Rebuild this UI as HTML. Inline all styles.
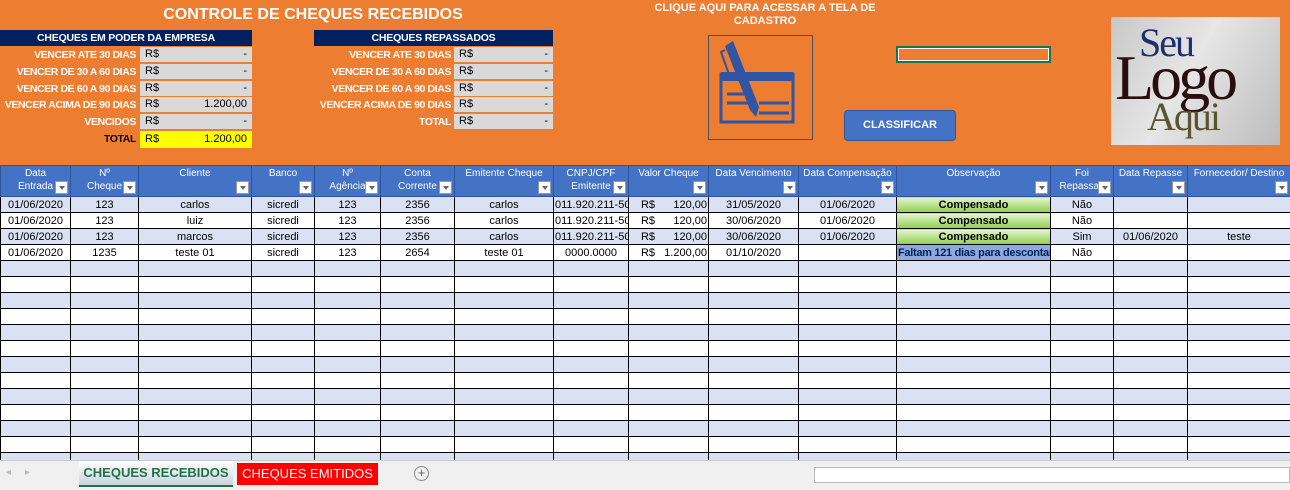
<!DOCTYPE html>
<html><head><meta charset="utf-8"><style>
*{margin:0;padding:0;box-sizing:border-box}
body{width:1290px;height:490px;overflow:hidden;background:#fff;font-family:"Liberation Sans",sans-serif;position:relative}
.top{position:absolute;left:0;top:0;width:1290px;height:165px;background:#ED7D31}
.a{position:absolute}
.nav{background:#002060;color:#fff;font-weight:bold;font-size:10.5px;text-align:center;height:16px;line-height:16px;letter-spacing:-0.2px}
.lbl{color:#fff;font-weight:bold;font-size:10.5px;text-align:right;height:16px;line-height:16px;white-space:nowrap;letter-spacing:-0.4px}
.cell{background:#D9D9D9;font-size:11px;height:15px;line-height:15px;padding:0 5px;display:flex;justify-content:space-between;color:#000}
table{position:absolute;left:0;top:165px;width:1290px;border-collapse:collapse;table-layout:fixed}
td{border:1px solid #000;font-size:11px;height:16px;line-height:14px;text-align:center;white-space:nowrap;overflow:hidden;padding:0 1px}
th{background:#4472C4;color:#fff;font-weight:normal;font-size:10px;height:31px;border:1px solid #2f5597;vertical-align:top;position:relative;line-height:13px;padding-top:1px;white-space:nowrap;overflow:hidden}
th i{position:absolute;right:2px;bottom:2px;width:13px;height:13px;background:#fff;border:1px solid #999}
th i:after{content:"";position:absolute;left:3px;top:4px;border-left:3px solid transparent;border-right:3px solid transparent;border-top:4px solid #666}
tr.b td{background:#D9E1F2}
.g{background:linear-gradient(#e8f5d0,#8fcf4f)!important;font-weight:bold}
.f{background:#8EA9DB!important;font-weight:bold;color:#002060;letter-spacing:-0.3px}
.tabs{position:absolute;left:0;top:460px;width:1290px;height:30px;background:#f0f0f0;border-top:1px solid #ccc}
</style></head><body>
<div class="top"></div>
<div class="a" style="left:0;top:6px;width:626px;text-align:center;color:#fff;font-weight:bold;font-size:16px">CONTROLE DE CHEQUES RECEBIDOS</div>
<div class="a nav" style="left:0;top:30px;width:252px">CHEQUES EM PODER DA EMPRESA</div>
<div class="a nav" style="left:314px;top:30px;width:239px">CHEQUES REPASSADOS</div>
<div class="a lbl" style="left:0;top:47px;width:136px">VENCER ATE 30 DIAS</div>
<div class="a lbl" style="left:0;top:64px;width:136px">VENCER DE 30 A 60 DIAS</div>
<div class="a lbl" style="left:0;top:81px;width:136px">VENCER DE 60 A 90 DIAS</div>
<div class="a lbl" style="left:-4px;top:97px;width:140px">VENCER ACIMA DE 90 DIAS</div>
<div class="a lbl" style="left:0;top:114px;width:136px">VENCIDOS</div>
<div class="a lbl" style="left:0;top:131px;width:136px;color:#000">TOTAL</div>
<div class="a cell" style="left:140px;top:47px;width:112px"><span>R$</span><span>-</span></div>
<div class="a cell" style="left:140px;top:64px;width:112px"><span>R$</span><span>-</span></div>
<div class="a cell" style="left:140px;top:81px;width:112px"><span>R$</span><span>-</span></div>
<div class="a cell" style="left:140px;top:97px;width:112px"><span>R$</span><span>1.200,00</span></div>
<div class="a cell" style="left:140px;top:114px;width:112px"><span>R$</span><span>-</span></div>
<div class="a cell" style="left:140px;top:131px;width:112px;background:#ff0;height:17px;line-height:17px"><span>R$</span><span>1.200,00</span></div>
<div class="a lbl" style="left:300px;top:47px;width:151px">VENCER ATE 30 DIAS</div>
<div class="a lbl" style="left:300px;top:64px;width:151px">VENCER DE 30 A 60 DIAS</div>
<div class="a lbl" style="left:300px;top:81px;width:151px">VENCER DE 60 A 90 DIAS</div>
<div class="a lbl" style="left:300px;top:97px;width:151px">VENCER ACIMA DE 90 DIAS</div>
<div class="a lbl" style="left:300px;top:114px;width:151px">TOTAL</div>
<div class="a cell" style="left:454px;top:47px;width:99px"><span>R$</span><span>-</span></div>
<div class="a cell" style="left:454px;top:64px;width:99px"><span>R$</span><span>-</span></div>
<div class="a cell" style="left:454px;top:81px;width:99px"><span>R$</span><span>-</span></div>
<div class="a cell" style="left:454px;top:97px;width:99px"><span>R$</span><span>-</span></div>
<div class="a cell" style="left:454px;top:114px;width:99px"><span>R$</span><span>-</span></div>
<div class="a" style="left:645px;top:2px;width:240px;text-align:center;color:#fff;font-weight:bold;font-size:11px;line-height:13px">CLIQUE AQUI PARA ACESSAR A TELA DE CADASTRO</div>
<div class="a" style="left:708px;top:35px;width:105px;height:105px;border:1px solid #44546A">
<svg width="103" height="103" viewBox="0 0 103 103"><rect x="12" y="38" width="72" height="48" fill="none" stroke="#2F55A4" stroke-width="3"/><rect x="12" y="36" width="72" height="9" fill="#2F55A4"/><path d="M18 58h22M18 67h22M50 67h30M50 77h30" stroke="#2F55A4" stroke-width="3"/><path d="M16 10l8-5 26 66-3 10-6-7z" fill="#2F55A4"/><path d="M16 14l-4 2 10 28" stroke="#2F55A4" stroke-width="2" fill="none"/></svg></div>
<div class="a" style="left:896px;top:46px;width:155px;height:17px;border:2px solid #217346;outline:1px solid #fff;outline-offset:-3px"></div>
<div class="a" style="left:844px;top:110px;width:112px;height:31px;background:#4472C4;border:1px solid #2F5597;border-radius:4px;color:#fff;font-weight:bold;font-size:11px;text-align:center;line-height:29px">CLASSIFICAR</div>
<div class="a" style="left:1111px;top:17px;width:169px;height:128px;background:linear-gradient(120deg,#c8c8c8,#e6e6e6 45%,#bcbcbc);font-family:'Liberation Serif',serif;overflow:hidden">
<div class="a" style="left:28px;top:2px;font-size:40px;color:#1f2f6b;letter-spacing:-2px">Seu</div>
<div class="a" style="left:4px;top:24px;font-size:64px;color:#2a0e0e;letter-spacing:-4px">Logo</div>
<div class="a" style="left:36px;top:76px;font-size:40px;color:#5a5530;letter-spacing:-2px">Aqui</div></div>
<table>
<colgroup><col style="width:70px"><col style="width:68px"><col style="width:113px"><col style="width:63px"><col style="width:66px"><col style="width:74px"><col style="width:99px"><col style="width:75px"><col style="width:80px"><col style="width:90px"><col style="width:98px"><col style="width:154px"><col style="width:63px"><col style="width:74px"><col style="width:103px"></colgroup>
<tr><th>Data<br>Entrada<i></i></th><th>Nº<br>Cheque<i></i></th><th>Cliente<i></i></th><th>Banco<i></i></th><th>Nº<br>Agência<i></i></th><th>Conta<br>Corrente<i></i></th><th>Emitente Cheque<i></i></th><th>CNPJ/CPF<br>Emitente<i></i></th><th>Valor Cheque<i></i></th><th>Data Vencimento<i></i></th><th>Data Compensação<i></i></th><th>Observação<i></i></th><th>Foi<br>Repassad<i></i></th><th>Data Repasse<i></i></th><th>Fornecedor/ Destino<i></i></th></tr>
<tr class="b"><td>01/06/2020</td><td>123</td><td>carlos</td><td>sicredi</td><td>123</td><td>2356</td><td>carlos</td><td>011.920.211-50</td><td style="text-align:right">R$ &nbsp;&nbsp;&nbsp;&nbsp; 120,00</td><td>31/05/2020</td><td>01/06/2020</td><td class="g">Compensado</td><td>Não</td><td></td><td></td></tr>
<tr><td>01/06/2020</td><td>123</td><td>luiz</td><td>sicredi</td><td>123</td><td>2356</td><td>carlos</td><td>011.920.211-50</td><td style="text-align:right">R$ &nbsp;&nbsp;&nbsp;&nbsp; 120,00</td><td>30/06/2020</td><td>01/06/2020</td><td class="g">Compensado</td><td>Não</td><td></td><td></td></tr>
<tr class="b"><td>01/06/2020</td><td>123</td><td>marcos</td><td>sicredi</td><td>123</td><td>2356</td><td>carlos</td><td>011.920.211-50</td><td style="text-align:right">R$ &nbsp;&nbsp;&nbsp;&nbsp; 120,00</td><td>30/06/2020</td><td>01/06/2020</td><td class="g">Compensado</td><td>Sim</td><td>01/06/2020</td><td>teste</td></tr>
<tr><td>01/06/2020</td><td>1235</td><td>teste 01</td><td>sicredi</td><td>123</td><td>2654</td><td>teste 01</td><td>0000.0000</td><td style="text-align:right">R$ &nbsp; 1.200,00</td><td>01/10/2020</td><td></td><td class="f">Faltam 121 dias para descontar</td><td>Não</td><td></td><td></td></tr>
<tr class="b"><td></td><td></td><td></td><td></td><td></td><td></td><td></td><td></td><td></td><td></td><td></td><td></td><td></td><td></td><td></td></tr>
<tr><td></td><td></td><td></td><td></td><td></td><td></td><td></td><td></td><td></td><td></td><td></td><td></td><td></td><td></td><td></td></tr>
<tr class="b"><td></td><td></td><td></td><td></td><td></td><td></td><td></td><td></td><td></td><td></td><td></td><td></td><td></td><td></td><td></td></tr>
<tr><td></td><td></td><td></td><td></td><td></td><td></td><td></td><td></td><td></td><td></td><td></td><td></td><td></td><td></td><td></td></tr>
<tr class="b"><td></td><td></td><td></td><td></td><td></td><td></td><td></td><td></td><td></td><td></td><td></td><td></td><td></td><td></td><td></td></tr>
<tr><td></td><td></td><td></td><td></td><td></td><td></td><td></td><td></td><td></td><td></td><td></td><td></td><td></td><td></td><td></td></tr>
<tr class="b"><td></td><td></td><td></td><td></td><td></td><td></td><td></td><td></td><td></td><td></td><td></td><td></td><td></td><td></td><td></td></tr>
<tr><td></td><td></td><td></td><td></td><td></td><td></td><td></td><td></td><td></td><td></td><td></td><td></td><td></td><td></td><td></td></tr>
<tr class="b"><td></td><td></td><td></td><td></td><td></td><td></td><td></td><td></td><td></td><td></td><td></td><td></td><td></td><td></td><td></td></tr>
<tr><td></td><td></td><td></td><td></td><td></td><td></td><td></td><td></td><td></td><td></td><td></td><td></td><td></td><td></td><td></td></tr>
<tr class="b"><td></td><td></td><td></td><td></td><td></td><td></td><td></td><td></td><td></td><td></td><td></td><td></td><td></td><td></td><td></td></tr>
<tr><td></td><td></td><td></td><td></td><td></td><td></td><td></td><td></td><td></td><td></td><td></td><td></td><td></td><td></td><td></td></tr>
<tr class="b"><td></td><td></td><td></td><td></td><td></td><td></td><td></td><td></td><td></td><td></td><td></td><td></td><td></td><td></td><td></td></tr>
</table>
<div class="tabs">
<div class="a" style="left:6px;top:6px;color:#bbb;font-size:10px">◂ &nbsp;&nbsp;&nbsp; ▸</div>
<div class="a" style="left:79px;top:0;width:154px;height:26px;background:linear-gradient(#fff,#c9d3de);border-bottom:2px solid #217346;color:#217346;font-weight:bold;font-size:13px;text-align:center;line-height:24px">CHEQUES RECEBIDOS</div>
<div class="a" style="left:237px;top:2px;width:141px;height:22px;background:#f00;color:#fff;font-size:13px;text-align:center;line-height:22px">CHEQUES EMITIDOS</div>
<div class="a" style="left:414px;top:5px;width:15px;height:15px;border:1px solid #888;border-radius:50%;color:#666;font-size:13px;line-height:12px;text-align:center">+</div>
<div class="a" style="left:814px;top:6px;width:476px;height:16px;border:1px solid #bbb;background:#fff"></div>
</div>
</body></html>
